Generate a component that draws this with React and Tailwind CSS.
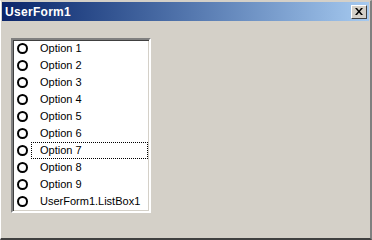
import { useState } from 'react';

const options = [
  'Option 1', 'Option 2', 'Option 3', 'Option 4', 'Option 5',
  'Option 6', 'Option 7', 'Option 8', 'Option 9', 'UserForm1.ListBox1',
];

export default function App() {
  const [focused, setFocused] = useState(6);

  return (
    <div className="w-[372px] h-[240px] bg-[#d4d0c8] flex flex-col overflow-hidden" style={{ fontFamily: '"Liberation Sans", Arial, sans-serif' }}>
      {/* window frame */}
      <div className="flex-1 flex flex-col border-l border-t border-l-[#ffffff] border-t-[#d4d0c8] border-r-2 border-b-2 border-r-[#808080] border-b-[#404040] px-[1px] pt-[1px]">
        {/* title bar */}
        <div className="h-[19px] flex items-center justify-between pl-[3px] pr-[2px] bg-gradient-to-r from-[#0a246a] to-[#a6caf0]">
          <span className="text-white font-bold text-[12px] leading-none tracking-[0.3px]">UserForm1</span>
          <button className="w-[16px] h-[14px] bg-[#d4d0c8] border border-t-white border-l-white border-r-[#404040] border-b-[#404040] flex items-center justify-center">
            <svg width="8" height="7" viewBox="0 0 8 7">
              <path d="M0 0h2l2 2.5L6 0h2L5 3.5 8 7H6L4 4.5 2 7H0l3-3.5z" fill="#000" />
            </svg>
          </button>
        </div>

        {/* client area */}
        <div className="flex-1 pt-[17px] pl-[9px]">
          <div className="w-[140px] h-[175px] bg-white border-2 border-t-[#808080] border-l-[#808080] border-r-[#ffffff] border-b-[#ffffff] shadow-[inset_1px_1px_0_#404040,inset_-1px_-1px_0_#d4d0c8]">
            <div className="pl-[2px]">
              {options.map((label, i) => (
                <div
                  key={label}
                  onClick={() => setFocused(i)}
                  className="h-[17px] flex items-center"
                >
                  <div className="w-[11px] h-[11px] shrink-0 ml-[2px] rounded-full border-2 border-black" />
                  <div className={`ml-[3px] flex-1 h-[17px] mr-[1px] flex items-center pl-[8px] text-[11px] text-black whitespace-nowrap border ${i === focused ? 'border-dotted border-black' : 'border-transparent'}`}>
                    {label}
                  </div>
                </div>
              ))}
            </div>
          </div>
        </div>
      </div>
    </div>
  );
}
